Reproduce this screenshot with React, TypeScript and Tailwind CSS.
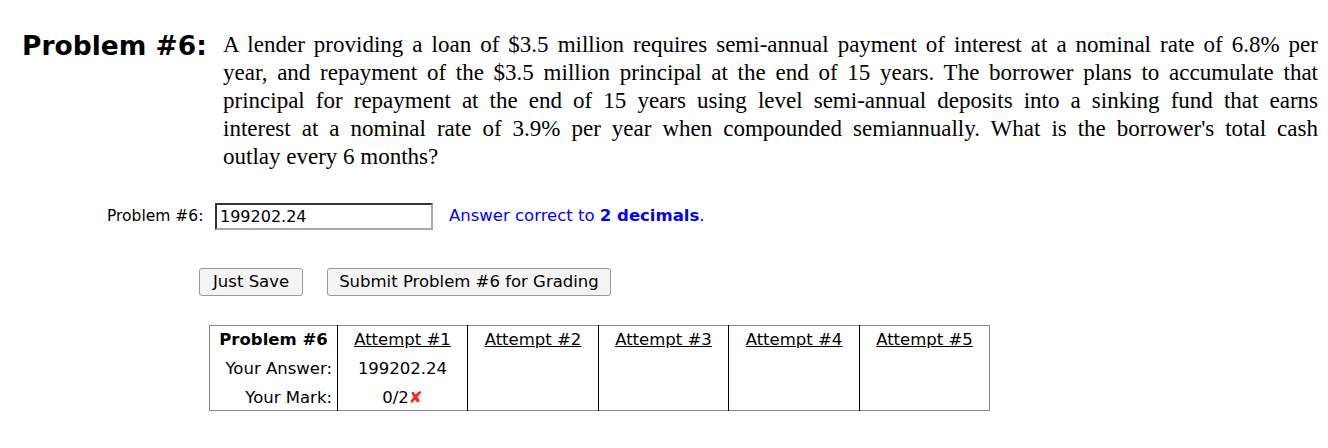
import React from 'react';

const verdana = { fontFamily: '"DejaVu Sans", Verdana, sans-serif' };

const lines = [
  'A lender providing a loan of $3.5 million requires semi-annual payment of interest at a nominal rate of 6.8% per',
  'year, and repayment of the $3.5 million principal at the end of 15 years. The borrower plans to accumulate that',
  'principal for repayment at the end of 15 years using level semi-annual deposits into a sinking fund that earns',
  "interest at a nominal rate of 3.9% per year when compounded semiannually. What is the borrower's total cash",
];

export default function App() {
  const attempts = ['Attempt #1', 'Attempt #2', 'Attempt #3', 'Attempt #4', 'Attempt #5'];

  return (
    <div className="w-[1328px] h-[448px] bg-white text-black overflow-hidden">
      {/* Problem statement */}
      <div className="flex pt-[31px]">
        <div className="w-[201px] ml-[22px] shrink-0 text-[26.5px] font-bold leading-[30px]" style={verdana}>
          Problem&nbsp;#6:
        </div>
        <div className="w-[1095px] text-[23px] leading-[28px] font-['Liberation_Serif',serif]">
          {lines.map((l) => (
            <div key={l} className="text-justify [text-align-last:justify] whitespace-nowrap">
              {l}
            </div>
          ))}
          <div>outlay every 6 months?</div>
        </div>
      </div>

      {/* Answer row */}
      <div className="flex items-center mt-[32px] ml-[107px] text-[15.5px]" style={verdana}>
        <span className="w-[108px]">Problem #6:</span>
        <div className="w-[218px] h-[27px] border-2 border-t-[#333] border-l-[#333] border-r-[#aaa] border-b-[#aaa] bg-white flex items-center px-[3px] text-[16px]">
          199202.24
        </div>
        <span className="ml-[16px] text-[16.5px] text-[#0000ff]">
          Answer correct to <b>2 decimals</b>.
        </span>
      </div>

      {/* Buttons */}
      <div className="flex mt-[38px] ml-[199px] gap-[24px] text-[16.5px]" style={verdana}>
        <button className="h-[28px] px-[13px] bg-[#f4f4f4] border border-[#999] rounded-[3px]">Just Save</button>
        <button className="h-[28px] px-[11px] bg-[#f4f4f4] border border-[#999] rounded-[3px]">
          Submit Problem #6 for Grading
        </button>
      </div>

      {/* Attempts table */}
      <table className="mt-[29px] ml-[209px] border border-[#888] border-collapse text-[16.5px]" style={verdana}>
        <tbody>
          <tr className="h-[29px]">
            <td className="w-[128px] border-r border-black text-center font-bold align-top pt-[2px]">Problem #6</td>
            {attempts.map((a, i) => (
              <td
                key={a}
                className={`${i % 2 === 0 ? 'w-[130px]' : 'w-[131px]'} text-center align-top pt-[2px] ${i < 4 ? 'border-r border-black' : ''}`}
                rowSpan={i === 0 ? 1 : 3}
              >
                <span className="underline">{a}</span>
              </td>
            ))}
          </tr>
          <tr className="h-[29px]">
            <td className="border-r border-black text-right pr-[5px] align-top pt-[2px]">Your Answer:</td>
            <td className="border-r border-black text-center align-top pt-[2px]">199202.24</td>
          </tr>
          <tr className="h-[25px]">
            <td className="border-r border-black text-right pr-[5px] align-top pt-[2px]">Your Mark:</td>
            <td className="border-r border-black text-center align-top pt-[2px]">
              0/2<span className="text-[#ff2020] font-bold">✘</span>
            </td>
          </tr>
        </tbody>
      </table>
    </div>
  );
}
